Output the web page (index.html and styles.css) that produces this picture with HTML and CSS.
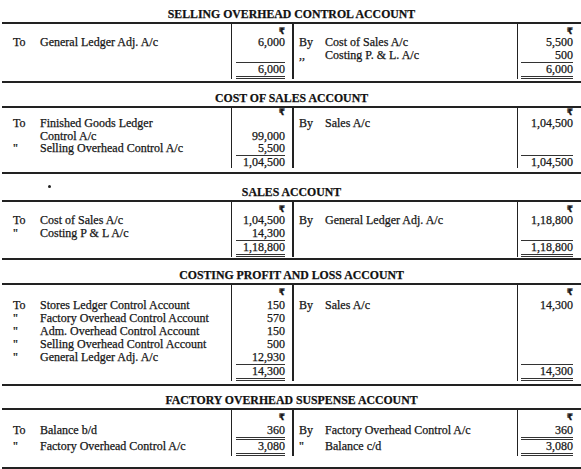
FILE: index.html
```html
<!DOCTYPE html>
<html>
<head>
<meta charset="utf-8">
<title>Cost Accounts</title>
<link rel="stylesheet" href="styles.css">
</head>
<body>
<main class="page">

  <section class="acct acct-1">
    <h2 class="acct-title">SELLING OVERHEAD CONTROL ACCOUNT</h2>
    <div class="ledger">
      <div class="side side-dr">
        <div class="part">
          <div class="line head"></div>
          <div class="line"><span class="pre">To</span>General Ledger Adj. A/c</div>
        </div>
        <div class="amt">
          <div class="line head"><span class="rupee">₹</span></div>
          <div class="line">6,000</div>
          <div class="line total">6,000</div>
        </div>
      </div>
      <div class="side side-cr">
        <div class="part">
          <div class="line head"></div>
          <div class="line"><span class="pre">By</span>Cost of Sales A/c</div>
          <div class="line"><span class="pre">,,</span>Costing P. &amp; L. A/c</div>
        </div>
        <div class="amt">
          <div class="line head"><span class="rupee">₹</span></div>
          <div class="line">5,500</div>
          <div class="line">500</div>
          <div class="line total">6,000</div>
        </div>
      </div>
    </div>
  </section>

  <section class="acct acct-2">
    <h2 class="acct-title">COST OF SALES ACCOUNT</h2>
    <div class="ledger">
      <div class="side side-dr">
        <div class="part">
          <div class="line head"></div>
          <div class="line"><span class="pre">To</span>Finished Goods Ledger</div>
          <div class="line"><span class="pre"></span>Control A/c</div>
          <div class="line"><span class="pre">"</span>Selling Overhead Control A/c</div>
        </div>
        <div class="amt">
          <div class="line head"><span class="rupee">₹</span></div>
          <div class="line"></div>
          <div class="line">99,000</div>
          <div class="line">5,500</div>
          <div class="line total single">1,04,500</div>
        </div>
      </div>
      <div class="side side-cr">
        <div class="part">
          <div class="line head"></div>
          <div class="line"><span class="pre">By</span>Sales A/c</div>
        </div>
        <div class="amt">
          <div class="line head"><span class="rupee">₹</span></div>
          <div class="line">1,04,500</div>
          <div class="line total single">1,04,500</div>
        </div>
      </div>
    </div>
  </section>

  <section class="acct acct-3">
    <div class="speck"></div>
    <h2 class="acct-title">SALES ACCOUNT</h2>
    <div class="ledger">
      <div class="side side-dr">
        <div class="part">
          <div class="line head"></div>
          <div class="line"><span class="pre">To</span>Cost of Sales A/c</div>
          <div class="line"><span class="pre">"</span>Costing P &amp; L A/c</div>
        </div>
        <div class="amt">
          <div class="line head"><span class="rupee">₹</span></div>
          <div class="line">1,04,500</div>
          <div class="line">14,300</div>
          <div class="line total">1,18,800</div>
        </div>
      </div>
      <div class="side side-cr">
        <div class="part">
          <div class="line head"></div>
          <div class="line"><span class="pre">By</span>General Ledger Adj. A/c</div>
        </div>
        <div class="amt">
          <div class="line head"><span class="rupee">₹</span></div>
          <div class="line">1,18,800</div>
          <div class="line total">1,18,800</div>
        </div>
      </div>
    </div>
  </section>

  <section class="acct acct-4">
    <h2 class="acct-title">COSTING PROFIT AND LOSS ACCOUNT</h2>
    <div class="ledger">
      <div class="side side-dr">
        <div class="part">
          <div class="line head"></div>
          <div class="line"><span class="pre">To</span>Stores Ledger Control Account</div>
          <div class="line"><span class="pre">"</span>Factory Overhead Control Account</div>
          <div class="line"><span class="pre">"</span>Adm. Overhead Control Account</div>
          <div class="line"><span class="pre">"</span>Selling Overhead Control Account</div>
          <div class="line"><span class="pre">"</span>General Ledger Adj. A/c</div>
        </div>
        <div class="amt">
          <div class="line head"><span class="rupee">₹</span></div>
          <div class="line">150</div>
          <div class="line">570</div>
          <div class="line">150</div>
          <div class="line">500</div>
          <div class="line">12,930</div>
          <div class="line total">14,300</div>
        </div>
      </div>
      <div class="side side-cr">
        <div class="part">
          <div class="line head"></div>
          <div class="line"><span class="pre">By</span>Sales A/c</div>
        </div>
        <div class="amt">
          <div class="line head"><span class="rupee">₹</span></div>
          <div class="line">14,300</div>
          <div class="line total">14,300</div>
        </div>
      </div>
    </div>
  </section>

  <section class="acct acct-5">
    <h2 class="acct-title">FACTORY OVERHEAD SUSPENSE ACCOUNT</h2>
    <div class="ledger">
      <div class="side side-dr">
        <div class="part">
          <div class="line head"></div>
          <div class="line line-gap"><span class="pre">To</span>Balance b/d</div>
          <div class="line"><span class="pre">"</span>Factory Overhead Control A/c</div>
        </div>
        <div class="amt">
          <div class="line head"><span class="rupee">₹</span></div>
          <div class="line dbl">360</div>
          <div class="line dbl">3,080</div>
        </div>
      </div>
      <div class="side side-cr">
        <div class="part">
          <div class="line head"></div>
          <div class="line line-gap"><span class="pre">By</span>Factory Overhead Control A/c</div>
          <div class="line"><span class="pre">"</span>Balance c/d</div>
        </div>
        <div class="amt">
          <div class="line head"><span class="rupee">₹</span></div>
          <div class="line dbl">360</div>
          <div class="line dbl">3,080</div>
        </div>
      </div>
    </div>
  </section>

</main>
</body>
</html>
```

FILE: styles.css
```css
* {
  box-sizing: border-box;
  margin: 0;
  padding: 0;
}

html, body {
  background: #ffffff;
}

body {
  color: #161616;
  font-family: "Liberation Serif", "Times New Roman", serif;
  font-size: 12px;
  -webkit-text-stroke: 0.25px #161616;
}

.page {
  width: 579px;
  margin-left: 2px;
  padding-top: 7px;
}

.acct-title {
  font-size: 11.8px;
  font-weight: bold;
  text-align: center;
  line-height: 15px;
  height: 15px;
  color: #111;
}

.acct-2 { margin-top: 8px; }
.acct-3 { margin-top: 11px; }
.acct-4 { margin-top: 8px; }
.acct-5 { margin-top: 7px; }

.speck {
  width: 3px;
  height: 3px;
  margin-left: 46px;
  margin-bottom: -3px;
  border-radius: 50%;
  background: #222;
}

.ledger {
  display: flex;
  border-top: 2px solid #222;
  border-bottom: 2px solid #222;
}

.acct-1 .ledger { padding-bottom: 2px; }
.acct-2 .ledger { padding-bottom: 4px; }
.acct-3 .ledger { padding-bottom: 1px; }
.acct-4 .ledger { padding-bottom: 3px; }
.acct-5 .ledger { padding-bottom: 11px; }

.side {
  display: flex;
}

.side-dr {
  width: 290px;
}

.side-cr {
  flex: 1;
  border-left: 2px solid #222;
}

.part {
  flex: 1;
}

.side-dr .part {
  padding-left: 11px;
}

.side-cr .part {
  padding-left: 5px;
}

.side-dr .pre {
  display: inline-block;
  width: 27px;
}

.side-cr .pre {
  display: inline-block;
  width: 26px;
}

.amt {
  width: 61px;
  border-left: 1px solid #222;
  display: flex;
  flex-direction: column;
  text-align: right;
  padding: 0 7px 0 4px;
}

.side-cr .amt {
  width: 64px;
  padding: 0 8px 0 3px;
}

.line {
  height: 13px;
  line-height: 13px;
  white-space: nowrap;
}

.line.head {
  height: 12px;
  line-height: 12px;
}

.acct-2 .line {
  height: 12.5px;
  line-height: 12.5px;
}

.acct-2 .line.head {
  height: 9px;
  line-height: 9px;
}

.acct-2 .rupee {
  display: inline-block;
  line-height: 9px;
  vertical-align: top;
}

.acct-4 .line.head,
.acct-5 .line.head {
  height: 14px;
  line-height: 13px;
}

.rupee {
  font-family: "DejaVu Sans", "Noto Sans", sans-serif;
  font-size: 9px;
  font-weight: bold;
}

.line.total {
  margin-top: auto;
  height: 17px;
  border-top: 1px solid #333;
  border-bottom: 3px double #333;
}

.acct-2 .line.total.single {
  height: 13.5px;
  border-bottom: 0;
}

.line.dbl {
  height: 16px;
  border-bottom: 3px double #333;
}

.line.line-gap {
  height: 16px;
}
```
